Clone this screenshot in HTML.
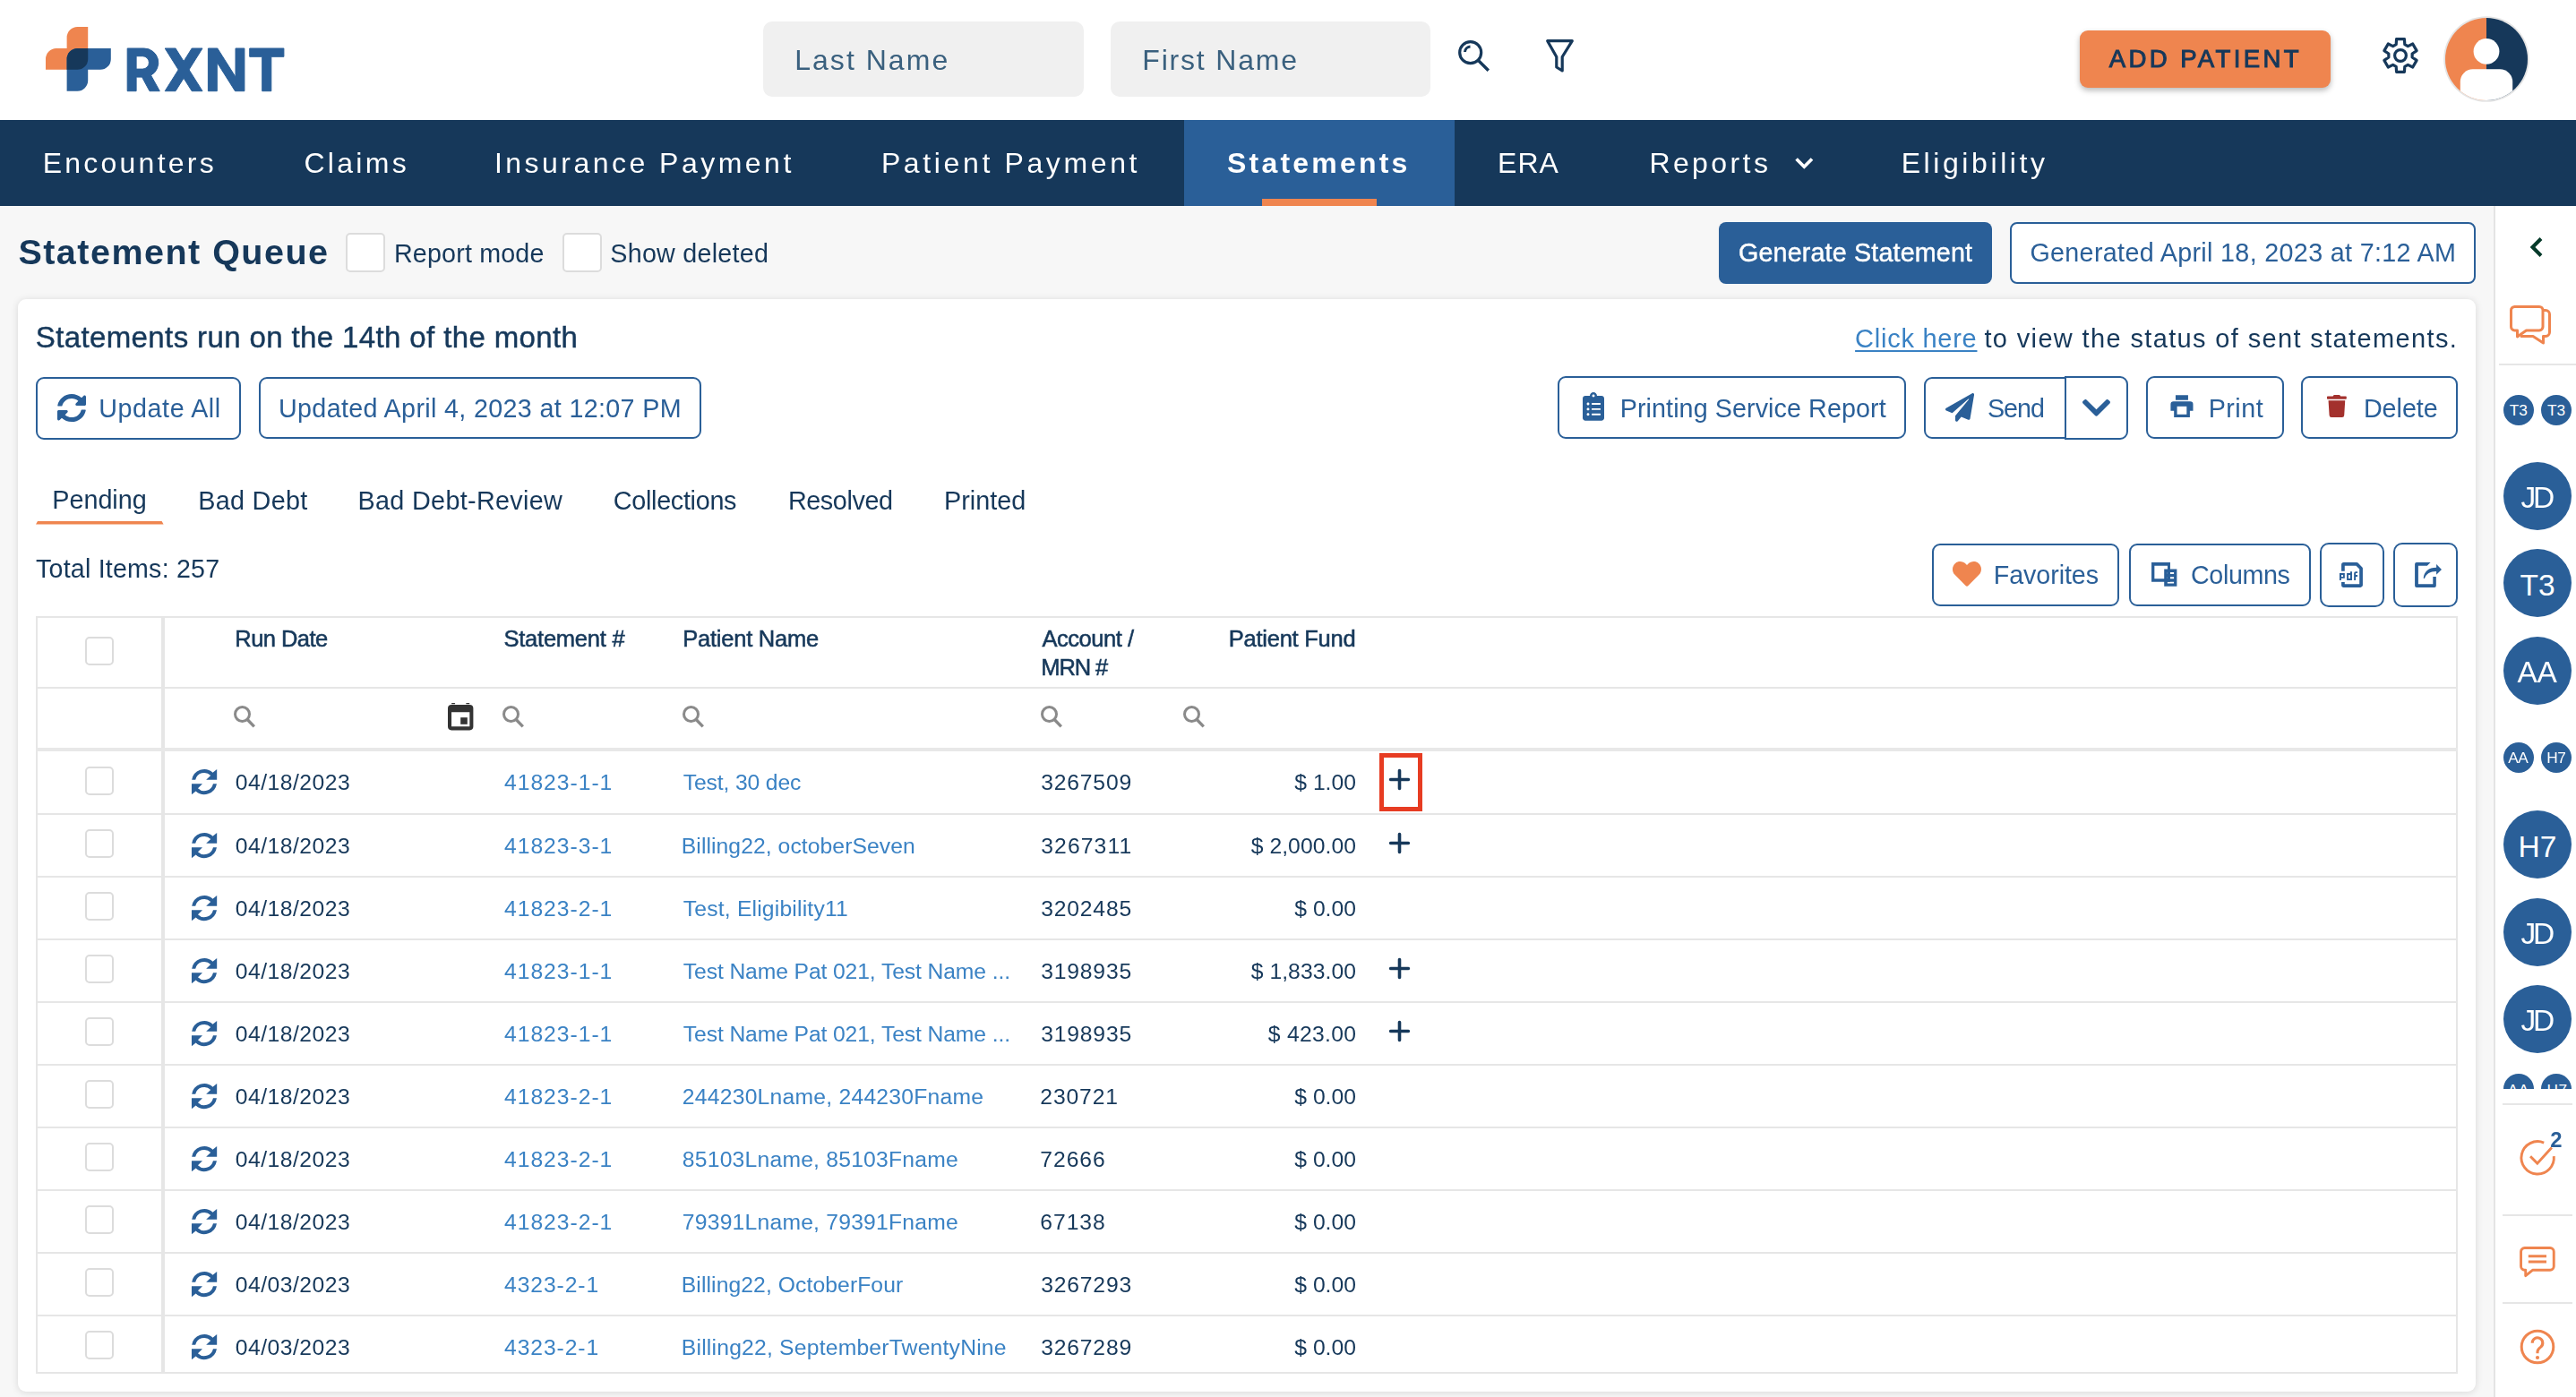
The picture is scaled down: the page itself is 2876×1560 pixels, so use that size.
<!DOCTYPE html>
<html lang="en"><head><meta charset="utf-8"><title>Statement Queue</title>
<style>
html,body{margin:0;padding:0;overflow:hidden}
body{width:2876px;height:1560px;overflow:hidden;background:#f7f7f7;position:relative;font-family:"Liberation Sans",sans-serif}
.b{position:absolute;box-sizing:border-box}
.t{position:absolute;white-space:nowrap;line-height:1;font-family:"Liberation Sans",sans-serif}
svg{display:block}
</style></head><body>
<div id="app" style="position:absolute;left:0;top:0;width:2876px;height:1560px;overflow:hidden">
<div class="b" style="left:0px;top:0px;width:2876px;height:134px;background:#fff;"></div>
<svg style="position:absolute;left:51.40px;top:30.00px;overflow:visible" width="72.80" height="71.80" viewBox="0 0 74 72" preserveAspectRatio="none" ><path fill="#ef854f" d="M36 0h12v36a12 12 0 0 1-12 12H0V36a12 12 0 0 1 12-12h12V12A12 12 0 0 1 36 0z"/><path fill="#2a5f98" d="M36 24h38v12a12 12 0 0 1-12 12H48v12a12 12 0 0 1-12 12H24V36a12 12 0 0 1 12-12z"/><path fill="#16385a" d="M36 24h12v12a12 12 0 0 1-12 12H24V36a12 12 0 0 1 12-12z"/></svg>
<svg style="position:absolute;left:140.00px;top:50.00px;overflow:visible" width="180.00" height="55.00" viewBox="140 50 180 55" preserveAspectRatio="none" ><path fill="#2a5f98" stroke="#2a5f98" stroke-width="1" stroke-linejoin="round" fill-rule="evenodd" d="M142.2 54H160.75A16.05 16.05 0 0 1 168.5 84.1L178.3 101.7H167L158.6 86.1H152.1V101.7H142.2ZM152.1 62.7H159.2A7.2 7.2 0 0 1 159.2 77.1H152.1Z"/><path fill="#2a5f98" stroke="#2a5f98" stroke-width="1" stroke-linejoin="round" d="M184.2 54H196L226 101.7H214.2Z M214.2 54H226L196 101.7H184.2ZM232.4 54H242.8L263 86V54H272.9V101.7H262.5L242.3 69.7V101.7H232.4ZM278.7 54H316.9V63.3H302.8V101.7H292.7V63.3H278.7Z"/></svg>
<div class="b" style="left:852px;top:24px;width:358px;height:84px;background:#f0f0f0;border-radius:10px;"></div>
<div class="b" style="left:1240px;top:24px;width:357px;height:84px;background:#f0f0f0;border-radius:10px;"></div>
<svg style="position:absolute;left:1628.00px;top:44.50px;overflow:visible" width="35.00" height="35.00" viewBox="0 0 35 35" preserveAspectRatio="none" ><circle cx="13.700" cy="13.700" r="12" fill="none" stroke="#16385a" stroke-width="3.200"/><path d="M22.500 22.500L33.800 33.800" stroke="#16385a" stroke-width="3.400" fill="none"/><path d="M7.500 13a6.500 6.500 0 0 1 6-6" stroke="#16385a" stroke-width="3" fill="none"/></svg>
<svg style="position:absolute;left:1725.50px;top:44.00px;overflow:visible" width="31.00" height="37.00" viewBox="0 0 31 37" preserveAspectRatio="none" ><path d="M1.700 1.700H29.300L18.200 19.500V35L11.800 31V19.500Z" fill="none" stroke="#16385a" stroke-width="3.200" stroke-linejoin="round"/></svg>
<div class="b" style="left:2322.2px;top:34px;width:280.0px;height:64px;background:#ef854f;border-radius:9px;box-shadow:0 3px 6px rgba(0,0,0,0.28);"></div>
<svg style="position:absolute;left:2660.00px;top:42.00px;overflow:visible" width="40.00" height="40.00" viewBox="-20 -20 40 40" preserveAspectRatio="none" ><path d="M-4.81 -12.40L-4.40 -18.38L4.40 -18.38L4.81 -12.40L8.33 -10.37L13.72 -13.00L18.12 -5.38L13.14 -2.03L13.14 2.03L18.12 5.38L13.72 13.00L8.33 10.37L4.81 12.40L4.40 18.38L-4.40 18.38L-4.81 12.40L-8.33 10.37L-13.72 13.00L-18.12 5.38L-13.14 2.03L-13.14 -2.03L-18.12 -5.38L-13.72 -13.00L-8.33 -10.37Z" fill="none" stroke="#16385a" stroke-width="3.200" stroke-linejoin="round"/><circle cx="0" cy="0" r="6.400" fill="none" stroke="#16385a" stroke-width="3.200"/></svg>
<svg style="position:absolute;left:2728.00px;top:18.00px;overflow:visible" width="96.00" height="96.00" viewBox="-48 -48 96 96" preserveAspectRatio="none" ><defs><clipPath id="avc"><circle cx="0" cy="0" r="46"/></clipPath></defs><circle cx="0" cy="0" r="47.8" fill="#e4e4e4"/><g clip-path="url(#avc)"><rect x="-46" y="-46" width="46" height="92" fill="#ef854f"/><rect x="0" y="-46" width="46" height="92" fill="#16385a"/><circle cx="0" cy="-8.600" r="14.400" fill="#fff"/><rect x="-29.200" y="11.300" width="58.400" height="60" rx="14" fill="#fff"/></g></svg>
<div class="b" style="left:0px;top:134px;width:2876px;height:96px;background:#16385a;"></div>
<div class="b" style="left:1322px;top:134px;width:302px;height:96px;background:#2a5f98;"></div>
<div class="b" style="left:1409px;top:222px;width:128px;height:8px;background:#ef854f;"></div>
<svg style="position:absolute;left:2004.00px;top:176.00px;overflow:visible" width="20.60" height="12.40" viewBox="0 0 19.2 12" preserveAspectRatio="none" ><path d="M1.500 1.500L9.600 9.800L17.700 1.500" fill="none" stroke="#fff" stroke-width="3.400"/></svg>
<div class="b" style="left:2784px;top:230px;width:92px;height:1330px;background:#fff;border-left:2px solid #e4e4e4;"></div>
<svg style="position:absolute;left:2825.30px;top:264.50px;overflow:visible" width="13.60" height="22.00" viewBox="0 0 13.6 22" preserveAspectRatio="none" ><path d="M12 1.500L2.500 11L12 20.500" fill="none" stroke="#063a2a" stroke-width="4"/></svg>
<svg style="position:absolute;left:2802.00px;top:340.60px;overflow:visible" width="46.00" height="43.40" viewBox="0 0 46 43.5" preserveAspectRatio="none" ><path d="M5.500 1.500H33a4 4 0 0 1 4 4V24a4 4 0 0 1-4 4H18.500L8.500 35V28H5.500a4 4 0 0 1-4-4V5.500a4 4 0 0 1 4-4z" fill="none" stroke="#ef854f" stroke-width="3" stroke-linejoin="round"/><path d="M37.500 5.500H40a4.500 4.500 0 0 1 4.500 4.500V30a4.500 4.500 0 0 1-4.500 4.500H37.500V42L26 34.500H12" fill="none" stroke="#ef854f" stroke-width="3" stroke-linejoin="round"/></svg>
<div class="b" style="left:2790px;top:406px;width:86px;height:2px;background:#e6e6e6;"></div>
<div class="b" style="left:2794.8px;top:440.5px;width:34.0px;height:34.0px;background:#2a5f98;border-radius:17px;"></div>
<div class="t" style="left:2711.8px;top:450.00px;width:200px;text-align:center;font-size:17.3px;color:#fff;letter-spacing:0px;">T3</div>
<div class="b" style="left:2837px;top:440.5px;width:34px;height:34.0px;background:#2a5f98;border-radius:17px;"></div>
<div class="t" style="left:2754px;top:450.00px;width:200px;text-align:center;font-size:17.3px;color:#fff;letter-spacing:0px;">T3</div>
<div class="b" style="left:2795px;top:516px;width:76px;height:76px;background:#2a5f98;border-radius:38px;"></div>
<div class="b" style="left:2795px;top:613.3px;width:76px;height:76.0px;background:#2a5f98;border-radius:38px;"></div>
<div class="t" style="left:2733px;top:637.00px;width:200px;text-align:center;font-size:33.5px;color:#fff;letter-spacing:0px;">T3</div>
<div class="b" style="left:2795px;top:710.7px;width:76px;height:76.0px;background:#2a5f98;border-radius:38px;"></div>
<div class="b" style="left:2794.8px;top:829px;width:34.0px;height:34px;background:#2a5f98;border-radius:17px;"></div>
<div class="b" style="left:2837px;top:829px;width:34px;height:34px;background:#2a5f98;border-radius:17px;"></div>
<div class="b" style="left:2795px;top:905.3px;width:76px;height:76.0px;background:#2a5f98;border-radius:38px;"></div>
<div class="t" style="left:2733px;top:929.00px;width:200px;text-align:center;font-size:33.5px;color:#fff;letter-spacing:0px;">H7</div>
<div class="b" style="left:2795px;top:1002.5999999999999px;width:76px;height:76.0px;background:#2a5f98;border-radius:38px;"></div>
<div class="b" style="left:2795px;top:1100px;width:76px;height:76px;background:#2a5f98;border-radius:38px;"></div>
<div class="b" style="left:2790px;top:1190px;width:86px;height:25.8px;overflow:hidden"><div class="b" style="left:4.6px;top:8.700px;width:34px;height:34px;border-radius:17px;background:#2a5f98"></div><div class="b" style="left:47px;top:8.700px;width:34px;height:34px;border-radius:17px;background:#2a5f98"></div><div class="t" style="left:9.700px;top:18.700px;font-size:17.300px;letter-spacing:0.5px;color:#fff">AA</div><div class="t" style="left:53.600px;top:18.700px;font-size:17.300px;letter-spacing:0.5px;color:#fff">H7</div></div>
<div class="b" style="left:2794px;top:1231.5px;width:78px;height:2.0px;background:#e6e6e6;"></div>
<svg style="position:absolute;left:2800.00px;top:1250.00px;overflow:visible" width="70.00" height="70.00" viewBox="0 0 1397 1397" preserveAspectRatio="none" ><path d="M801.5 519.9A363 363 0 1 0 1023.3 820.2" fill="none" stroke="#ef854f" stroke-width="58"/><path d="M500 822L655 980L975 628" fill="none" stroke="#ef854f" stroke-width="58" stroke-linejoin="miter"/></svg>
<div class="b" style="left:2794px;top:1356px;width:78px;height:2px;background:#e6e6e6;"></div>
<svg style="position:absolute;left:2813.20px;top:1391.70px;overflow:visible" width="39.70" height="34.20" viewBox="0 0 38.4 32.5" preserveAspectRatio="none" ><path d="M5.500 1.400H33a4 4 0 0 1 4 4V21a4 4 0 0 1-4 4H14L6.500 31V25H5.500a4 4 0 0 1-4-4V5.400a4 4 0 0 1 4-4z" fill="none" stroke="#ef854f" stroke-width="2.800" stroke-linejoin="round"/><path d="M9.500 10.200H29M9.500 16.200H29" stroke="#ef854f" stroke-width="2.800" fill="none"/></svg>
<div class="b" style="left:2794px;top:1453.5px;width:78px;height:2.0px;background:#e6e6e6;"></div>
<svg style="position:absolute;left:2813.00px;top:1484.00px;overflow:visible" width="40.00" height="40.00" viewBox="-20 -20 40 40" preserveAspectRatio="none" ><circle cx="0" cy="0" r="17.800" fill="none" stroke="#ef854f" stroke-width="3"/><path d="M-5.800 -4.300a5.800 5.800 0 1 1 9.500 4.400c-2.400 1.900-3.700 2.600-3.700 5.500v1.600" fill="none" stroke="#ef854f" stroke-width="3.100"/><circle cx="0" cy="12" r="2.100" fill="#ef854f"/></svg>
<div class="b" style="left:386px;top:260px;width:44px;height:43.60000000000002px;background:#fff;border:2px solid #dcdcdc;border-radius:5px;"></div>
<div class="b" style="left:628px;top:260px;width:44px;height:43.60000000000002px;background:#fff;border:2px solid #dcdcdc;border-radius:5px;"></div>
<div class="b" style="left:1919px;top:248px;width:305px;height:68.5px;background:#2a5f98;border-radius:8px;"></div>
<div class="b" style="left:2244px;top:248px;width:520px;height:68.5px;background:#fff;border:2px solid #2a5f98;border-radius:8px;"></div>
<div class="b" style="left:20px;top:334px;width:2744px;height:1220.3px;background:#fff;border-radius:9px;box-shadow:0 1px 9px rgba(0,0,0,0.13);"></div>
<div class="b" style="left:40px;top:421.2px;width:229px;height:69.40000000000003px;background:#fff;border:2px solid #2a5f98;border-radius:9px;"></div>
<svg style="position:absolute;left:64.00px;top:439.60px;overflow:visible" width="32.00" height="31.10" viewBox="8 8 496 496" preserveAspectRatio="none" ><path fill="#2a5f98" d="M370.72 133.28C339.458 104.008 298.888 87.962 255.848 88c-77.458.068-144.328 53.178-162.791 126.85-1.344 5.363-6.122 9.15-11.651 9.15H24.103c-7.498 0-13.194-6.807-11.807-14.176C33.933 94.924 134.813 8 256 8c66.448 0 126.791 26.136 171.315 68.685L463.03 40.97C478.149 25.851 504 36.559 504 57.941V192c0 13.255-10.745 24-24 24H345.941c-21.382 0-32.09-25.851-16.971-40.971l41.75-41.749zM32 296h134.059c21.382 0 32.09 25.851 16.971 40.971l-41.75 41.75c31.262 29.273 71.835 45.319 114.876 45.28 77.418-.07 144.315-53.144 162.787-126.849 1.344-5.363 6.122-9.15 11.651-9.15h57.304c7.498 0 13.194 6.807 11.807 14.176C478.067 417.076 377.187 504 256 504c-66.448 0-126.791-26.136-171.315-68.685L48.97 471.03C33.851 486.149 8 475.441 8 454.059V320c0-13.255 10.745-24 24-24z"/></svg>
<div class="b" style="left:289px;top:421.2px;width:494px;height:69.0px;background:#fff;border:2px solid #2a5f98;border-radius:9px;"></div>
<div class="b" style="left:1739px;top:420.4px;width:389px;height:69.20000000000005px;background:#fff;border:2px solid #2a5f98;border-radius:9px;"></div>
<svg style="position:absolute;left:1767.00px;top:438.20px;overflow:visible" width="24.00" height="31.80" viewBox="0 0 384 512" preserveAspectRatio="none" ><path fill="#2a5f98" d="M336 64h-80c0-35.3-28.7-64-64-64s-64 28.7-64 64H48C21.5 64 0 85.5 0 112v352c0 26.5 21.5 48 48 48h288c26.5 0 48-21.5 48-48V112c0-26.5-21.5-48-48-48zM96 424c-13.3 0-24-10.7-24-24s10.7-24 24-24 24 10.7 24 24-10.7 24-24 24zm0-96c-13.3 0-24-10.7-24-24s10.7-24 24-24 24 10.7 24 24-10.7 24-24 24zm0-96c-13.3 0-24-10.7-24-24s10.7-24 24-24 24 10.7 24 24-10.7 24-24 24zm96-192c13.3 0 24 10.7 24 24s-10.7 24-24 24-24-10.7-24-24 10.7-24 24-24zm128 368c0 4.4-3.6 8-8 8H168c-4.400 0-8-3.600-8-8v-16c0-4.400 3.600-8 8-8h144c4.400 0 8 3.600 8 8v16zm0-96c0 4.400-3.600 8-8 8H168c-4.400 0-8-3.600-8-8v-16c0-4.400 3.600-8 8-8h144c4.400 0 8 3.600 8 8v16zm0-96c0 4.400-3.600 8-8 8H168c-4.400 0-8-3.600-8-8v-16c0-4.400 3.600-8 8-8h144c4.400 0 8 3.600 8 8v16z"/></svg>
<div class="b" style="left:2148px;top:421.2px;width:158.5px;height:69.19999999999999px;background:#fff;border:2px solid #2a5f98;border-radius:9px 0 0 9px;"></div>
<div class="b" style="left:2304.5px;top:420.4px;width:71.5px;height:71.0px;background:#fff;border:2px solid #2a5f98;border-radius:0 9px 9px 0;"></div>
<svg style="position:absolute;left:2172.30px;top:439.00px;overflow:visible" width="32.10" height="31.80" viewBox="0 0 512 512" preserveAspectRatio="none" ><path fill="#2a5f98" d="M476 3.2L12.5 270.6c-18.1 10.4-15.8 35.6 2.2 43.2L121 358.4l287.3-253.2c5.5-4.9 13.3 2.6 8.6 8.3L176 407v80.5c0 23.6 28.5 32.9 42.5 15.8L282 426l124.6 52.2c14.2 6 30.4-2.9 33-18.2l72-432C515 7.8 493.3-6.800 476 3.2z"/></svg>
<svg style="position:absolute;left:2324.50px;top:446.30px;overflow:visible" width="31.00" height="18.70" viewBox="5.6 123.5 436.8 264.9" preserveAspectRatio="none" ><path fill="#2a5f98" d="M207.029 381.476L12.686 187.132c-9.373-9.373-9.373-24.569 0-33.941l22.667-22.667c9.357-9.357 24.522-9.375 33.901-.04L224 284.505l154.745-154.021c9.379-9.335 24.544-9.317 33.901.04l22.667 22.667c9.373 9.373 9.373 24.569 0 33.941L240.971 381.476c-9.373 9.372-24.569 9.372-33.942 0z"/></svg>
<div class="b" style="left:2396px;top:420.4px;width:153.5px;height:69.20000000000005px;background:#fff;border:2px solid #2a5f98;border-radius:9px;"></div>
<svg style="position:absolute;left:2410.00px;top:430.00px;overflow:visible" width="60.00" height="50.00" viewBox="0 0 1676 1397" preserveAspectRatio="none" ><path fill="#2a5f98" d="M530 315H920V465H530Z M465 510H985a90 90 0 0 1 90 90V805H375V600a90 90 0 0 1 90-90Z M480 700H975V1005H480Z"/><path fill="#fff" d="M575 665H875V915H575Z"/></svg>
<div class="b" style="left:2569px;top:420.4px;width:175px;height:69.20000000000005px;background:#fff;border:2px solid #2a5f98;border-radius:9px;"></div>
<svg style="position:absolute;left:2598.40px;top:441.00px;overflow:visible" width="21.80" height="25.00" viewBox="0 0 448 512" preserveAspectRatio="none" ><path fill="#a3312d" d="M432 32H312l-9.4-18.7A24 24 0 0 0 281.1 0H166.8a23.72 23.72 0 0 0-21.4 13.3L136 32H16A16 16 0 0 0 0 48v32a16 16 0 0 0 16 16h416a16 16 0 0 0 16-16V48a16 16 0 0 0-16-16zM53.2 467a48 48 0 0 0 47.9 45h245.8a48 48 0 0 0 47.9-45L416 128H32z"/></svg>
<div class="b" style="left:40px;top:582px;width:142.6px;height:3.6000000000000227px;background:#ef854f;clip-path:polygon(2px 0,calc(100% - 2px) 0,100% 100%,0 100%);"></div>
<div class="b" style="left:2156.5px;top:607px;width:209.0px;height:69.60000000000002px;background:#fff;border:2px solid #2a5f98;border-radius:9px;"></div>
<svg style="position:absolute;left:2180.00px;top:627.00px;overflow:visible" width="32.00" height="27.70" viewBox="0 32 512 448" preserveAspectRatio="none" ><path fill="#ef854f" d="M462.3 62.6C407.5 15.9 326 24.3 275.7 76.2L256 96.5l-19.7-20.3C186.1 24.3 104.5 15.9 49.7 62.6c-62.8 53.6-66.1 149.8-9.9 207.9l193.5 199.8c12.5 12.9 32.8 12.9 45.3 0l193.5-199.8c56.3-58.1 53-154.3-9.8-207.9z"/></svg>
<div class="b" style="left:2377px;top:607px;width:202.5px;height:69.60000000000002px;background:#fff;border:2px solid #2a5f98;border-radius:9px;"></div>
<svg style="position:absolute;left:2380.00px;top:620.00px;overflow:visible" width="70.00" height="46.00" viewBox="0 0 2126 1397" preserveAspectRatio="none" ><path fill="#2a5f98" fill-rule="evenodd" d="M670 245H1305V905H670Z M770 355H1215V795H770Z"/><path fill="#2a5f98" fill-rule="evenodd" d="M1100 470H1530V1055H1100Z M1210 575H1430V635H1210Z M1210 735H1430V795H1210Z M1210 900H1430V960H1210Z"/></svg>
<div class="b" style="left:2590px;top:606px;width:71.59999999999991px;height:71.60000000000002px;background:#fff;border:2px solid #2a5f98;border-radius:10px;"></div>
<div class="b" style="left:2672px;top:606px;width:71.80000000000018px;height:71.60000000000002px;background:#fff;border:2px solid #2a5f98;border-radius:10px;"></div>
<svg style="position:absolute;left:2600.00px;top:620.00px;overflow:visible" width="140.00" height="46.00" viewBox="0 0 2576 846" preserveAspectRatio="none" ><path d="M293 328V195a14 14 0 0 1 14-14H575L663.5 270V612a14 14 0 0 1-14 14H307a14 14 0 0 1-14-14V550" fill="none" stroke="#2a5f98" stroke-width="68" stroke-linejoin="round"/><path fill="#2a5f98" fill-rule="evenodd" d="M220 370H328V475H255V515H220Z M258 405H295V440H258Z M370 370H440V335H478V515H370Z M405 405H440V478H405Z M518 515V372Q518 335 555 335H590V368H560Q553 368 553 375V405H590V440H553V515Z"/><path d="M2020 215H1838V592H2140V440H2205V625a35 35 0 0 1-35 35H1803a35 35 0 0 1-35-35V183a35 35 0 0 1 35-35H2090Z" fill="#2a5f98"/><path d="M2318 292L2210 185V255C2050 255 1955 340 1945 472L1968 478C2000 380 2080 330 2210 330V400Z" fill="#2a5f98"/></svg>
<div class="b" style="left:40px;top:688px;width:2704px;height:846px;background:#fff;border:2px solid #e6e6e6;"></div>
<div class="b" style="left:180px;top:688px;width:4px;height:846px;background:#e6e6e6;"></div>
<div class="b" style="left:40px;top:767px;width:2704px;height:2px;background:#e6e6e6;"></div>
<div class="b" style="left:40px;top:835px;width:2704px;height:4px;background:#e8e8e8;"></div>
<div class="b" style="left:40px;top:907.5px;width:2704px;height:2.0px;background:#e6e6e6;"></div>
<div class="b" style="left:40px;top:977.5px;width:2704px;height:2.0px;background:#e6e6e6;"></div>
<div class="b" style="left:40px;top:1047.5px;width:2704px;height:2.0px;background:#e6e6e6;"></div>
<div class="b" style="left:40px;top:1117.5px;width:2704px;height:2.0px;background:#e6e6e6;"></div>
<div class="b" style="left:40px;top:1187.5px;width:2704px;height:2.0px;background:#e6e6e6;"></div>
<div class="b" style="left:40px;top:1257.5px;width:2704px;height:2.0px;background:#e6e6e6;"></div>
<div class="b" style="left:40px;top:1327.5px;width:2704px;height:2.0px;background:#e6e6e6;"></div>
<div class="b" style="left:40px;top:1397.5px;width:2704px;height:2.0px;background:#e6e6e6;"></div>
<div class="b" style="left:40px;top:1467.5px;width:2704px;height:2.0px;background:#e6e6e6;"></div>
<div class="b" style="left:95.2px;top:711px;width:32.0px;height:32px;background:#fff;border:2px solid #dcdcdc;border-radius:5px;"></div>
<svg style="position:absolute;left:261.30px;top:787.90px;overflow:visible" width="24.00" height="24.50" viewBox="0 0 24 24.5" preserveAspectRatio="none" ><circle cx="9.500" cy="9.500" r="8" fill="none" stroke="#8a8a8a" stroke-width="3"/><path d="M15.200 15.500L22.800 23.400" stroke="#8a8a8a" stroke-width="3.300" fill="none"/></svg>
<svg style="position:absolute;left:561.30px;top:787.90px;overflow:visible" width="24.00" height="24.50" viewBox="0 0 24 24.5" preserveAspectRatio="none" ><circle cx="9.500" cy="9.500" r="8" fill="none" stroke="#8a8a8a" stroke-width="3"/><path d="M15.200 15.500L22.800 23.400" stroke="#8a8a8a" stroke-width="3.300" fill="none"/></svg>
<svg style="position:absolute;left:761.70px;top:787.90px;overflow:visible" width="24.00" height="24.50" viewBox="0 0 24 24.5" preserveAspectRatio="none" ><circle cx="9.500" cy="9.500" r="8" fill="none" stroke="#8a8a8a" stroke-width="3"/><path d="M15.200 15.500L22.800 23.400" stroke="#8a8a8a" stroke-width="3.300" fill="none"/></svg>
<svg style="position:absolute;left:1161.70px;top:787.90px;overflow:visible" width="24.00" height="24.50" viewBox="0 0 24 24.5" preserveAspectRatio="none" ><circle cx="9.500" cy="9.500" r="8" fill="none" stroke="#8a8a8a" stroke-width="3"/><path d="M15.200 15.500L22.800 23.400" stroke="#8a8a8a" stroke-width="3.300" fill="none"/></svg>
<svg style="position:absolute;left:1321.20px;top:787.90px;overflow:visible" width="24.00" height="24.50" viewBox="0 0 24 24.5" preserveAspectRatio="none" ><circle cx="9.500" cy="9.500" r="8" fill="none" stroke="#8a8a8a" stroke-width="3"/><path d="M15.200 15.500L22.800 23.400" stroke="#8a8a8a" stroke-width="3.300" fill="none"/></svg>
<svg style="position:absolute;left:499.70px;top:785.40px;overflow:visible" width="28.40" height="30.40" viewBox="0 0 28 30" preserveAspectRatio="none" ><rect x="4" y="0" width="4" height="1.300" rx="0.600" fill="#333"/><rect x="20" y="0" width="4" height="1.300" rx="0.600" fill="#333"/><path fill="#333" fill-rule="evenodd" d="M4 2H24a4 4 0 0 1 4 4V26a4 4 0 0 1-4 4H4a4 4 0 0 1-4-4V6a4 4 0 0 1 4-4z M4 10H24V26H4z"/><rect x="14" y="16" width="7.500" height="7.500" fill="#333"/></svg>
<div class="b" style="left:95px;top:856px;width:31.799999999999997px;height:31.799999999999955px;background:#fff;border:2px solid #dcdcdc;border-radius:5px;"></div>
<svg style="position:absolute;left:213.90px;top:858.90px;overflow:visible" width="28.20" height="28.20" viewBox="250 250 785 785" preserveAspectRatio="none" ><path fill="#2a5f98" d="M255 580A392 392 0 0 1 905 352L1035 250V580H700L840.5 441.6A282 282 0 0 0 367 580ZM1029 704A392 392 0 0 1 379 932L249 1034V704H584L443.5 842.4A282 282 0 0 0 917 704Z"/></svg>
<svg style="position:absolute;left:1550.90px;top:859.20px;overflow:visible" width="23.00" height="23.00" viewBox="-11.5 -11.5 23 23" preserveAspectRatio="none" ><path d="M-9.9 0H9.9M0 -9.9V9.9" stroke="#16385a" stroke-width="3.6" stroke-linecap="round" fill="none"/></svg>
<div class="b" style="left:95px;top:926px;width:31.799999999999997px;height:31.799999999999955px;background:#fff;border:2px solid #dcdcdc;border-radius:5px;"></div>
<svg style="position:absolute;left:213.90px;top:929.90px;overflow:visible" width="28.20" height="28.20" viewBox="250 250 785 785" preserveAspectRatio="none" ><path fill="#2a5f98" d="M255 580A392 392 0 0 1 905 352L1035 250V580H700L840.5 441.6A282 282 0 0 0 367 580ZM1029 704A392 392 0 0 1 379 932L249 1034V704H584L443.5 842.4A282 282 0 0 0 917 704Z"/></svg>
<svg style="position:absolute;left:1550.90px;top:929.50px;overflow:visible" width="23.00" height="23.00" viewBox="-11.5 -11.5 23 23" preserveAspectRatio="none" ><path d="M-9.9 0H9.9M0 -9.9V9.9" stroke="#16385a" stroke-width="3.6" stroke-linecap="round" fill="none"/></svg>
<div class="b" style="left:95px;top:996px;width:31.799999999999997px;height:31.799999999999955px;background:#fff;border:2px solid #dcdcdc;border-radius:5px;"></div>
<svg style="position:absolute;left:213.90px;top:999.90px;overflow:visible" width="28.20" height="28.20" viewBox="250 250 785 785" preserveAspectRatio="none" ><path fill="#2a5f98" d="M255 580A392 392 0 0 1 905 352L1035 250V580H700L840.5 441.6A282 282 0 0 0 367 580ZM1029 704A392 392 0 0 1 379 932L249 1034V704H584L443.5 842.4A282 282 0 0 0 917 704Z"/></svg>
<div class="b" style="left:95px;top:1066px;width:31.799999999999997px;height:31.799999999999955px;background:#fff;border:2px solid #dcdcdc;border-radius:5px;"></div>
<svg style="position:absolute;left:213.90px;top:1069.90px;overflow:visible" width="28.20" height="28.20" viewBox="250 250 785 785" preserveAspectRatio="none" ><path fill="#2a5f98" d="M255 580A392 392 0 0 1 905 352L1035 250V580H700L840.5 441.6A282 282 0 0 0 367 580ZM1029 704A392 392 0 0 1 379 932L249 1034V704H584L443.5 842.4A282 282 0 0 0 917 704Z"/></svg>
<svg style="position:absolute;left:1550.90px;top:1069.50px;overflow:visible" width="23.00" height="23.00" viewBox="-11.5 -11.5 23 23" preserveAspectRatio="none" ><path d="M-9.9 0H9.9M0 -9.9V9.9" stroke="#16385a" stroke-width="3.6" stroke-linecap="round" fill="none"/></svg>
<div class="b" style="left:95px;top:1136px;width:31.799999999999997px;height:31.799999999999955px;background:#fff;border:2px solid #dcdcdc;border-radius:5px;"></div>
<svg style="position:absolute;left:213.90px;top:1139.90px;overflow:visible" width="28.20" height="28.20" viewBox="250 250 785 785" preserveAspectRatio="none" ><path fill="#2a5f98" d="M255 580A392 392 0 0 1 905 352L1035 250V580H700L840.5 441.6A282 282 0 0 0 367 580ZM1029 704A392 392 0 0 1 379 932L249 1034V704H584L443.5 842.4A282 282 0 0 0 917 704Z"/></svg>
<svg style="position:absolute;left:1550.90px;top:1139.50px;overflow:visible" width="23.00" height="23.00" viewBox="-11.5 -11.5 23 23" preserveAspectRatio="none" ><path d="M-9.9 0H9.9M0 -9.9V9.9" stroke="#16385a" stroke-width="3.6" stroke-linecap="round" fill="none"/></svg>
<div class="b" style="left:95px;top:1206px;width:31.799999999999997px;height:31.799999999999955px;background:#fff;border:2px solid #dcdcdc;border-radius:5px;"></div>
<svg style="position:absolute;left:213.90px;top:1209.90px;overflow:visible" width="28.20" height="28.20" viewBox="250 250 785 785" preserveAspectRatio="none" ><path fill="#2a5f98" d="M255 580A392 392 0 0 1 905 352L1035 250V580H700L840.5 441.6A282 282 0 0 0 367 580ZM1029 704A392 392 0 0 1 379 932L249 1034V704H584L443.5 842.4A282 282 0 0 0 917 704Z"/></svg>
<div class="b" style="left:95px;top:1276px;width:31.799999999999997px;height:31.799999999999955px;background:#fff;border:2px solid #dcdcdc;border-radius:5px;"></div>
<svg style="position:absolute;left:213.90px;top:1279.90px;overflow:visible" width="28.20" height="28.20" viewBox="250 250 785 785" preserveAspectRatio="none" ><path fill="#2a5f98" d="M255 580A392 392 0 0 1 905 352L1035 250V580H700L840.5 441.6A282 282 0 0 0 367 580ZM1029 704A392 392 0 0 1 379 932L249 1034V704H584L443.5 842.4A282 282 0 0 0 917 704Z"/></svg>
<div class="b" style="left:95px;top:1346px;width:31.799999999999997px;height:31.799999999999955px;background:#fff;border:2px solid #dcdcdc;border-radius:5px;"></div>
<svg style="position:absolute;left:213.90px;top:1349.90px;overflow:visible" width="28.20" height="28.20" viewBox="250 250 785 785" preserveAspectRatio="none" ><path fill="#2a5f98" d="M255 580A392 392 0 0 1 905 352L1035 250V580H700L840.5 441.6A282 282 0 0 0 367 580ZM1029 704A392 392 0 0 1 379 932L249 1034V704H584L443.5 842.4A282 282 0 0 0 917 704Z"/></svg>
<div class="b" style="left:95px;top:1416px;width:31.799999999999997px;height:31.799999999999955px;background:#fff;border:2px solid #dcdcdc;border-radius:5px;"></div>
<svg style="position:absolute;left:213.90px;top:1419.90px;overflow:visible" width="28.20" height="28.20" viewBox="250 250 785 785" preserveAspectRatio="none" ><path fill="#2a5f98" d="M255 580A392 392 0 0 1 905 352L1035 250V580H700L840.5 441.6A282 282 0 0 0 367 580ZM1029 704A392 392 0 0 1 379 932L249 1034V704H584L443.5 842.4A282 282 0 0 0 917 704Z"/></svg>
<div class="b" style="left:95px;top:1486px;width:31.799999999999997px;height:31.799999999999955px;background:#fff;border:2px solid #dcdcdc;border-radius:5px;"></div>
<svg style="position:absolute;left:213.90px;top:1489.90px;overflow:visible" width="28.20" height="28.20" viewBox="250 250 785 785" preserveAspectRatio="none" ><path fill="#2a5f98" d="M255 580A392 392 0 0 1 905 352L1035 250V580H700L840.5 441.6A282 282 0 0 0 367 580ZM1029 704A392 392 0 0 1 379 932L249 1034V704H584L443.5 842.4A282 282 0 0 0 917 704Z"/></svg>
<div class="b" style="left:1540px;top:841px;width:48px;height:64.79999999999995px;border:5px solid #e73c22;"></div>
<div style="position:absolute;left:0;top:0;width:2876px;height:1560px;will-change:transform">
<div class="t" style="left:887.20px;top:51.00px;font-size:32px;color:#3a607e;letter-spacing:2.033px;">Last Name</div>
<div class="t" style="left:1275.30px;top:51.00px;font-size:32px;color:#3a607e;letter-spacing:1.805px;">First Name</div>
<div class="t" style="left:2354.80px;top:52.00px;font-size:27.6px;color:#16385a;letter-spacing:3.351px;-webkit-text-stroke:1.0px #16385a;">ADD PATIENT</div>
<div class="t" style="left:47.70px;top:166.00px;font-size:32px;color:#fff;letter-spacing:3.236px;">Encounters</div>
<div class="t" style="left:339.40px;top:166.00px;font-size:32px;color:#fff;letter-spacing:3.304px;">Claims</div>
<div class="t" style="left:551.90px;top:166.00px;font-size:32px;color:#fff;letter-spacing:3.480px;">Insurance Payment</div>
<div class="t" style="left:983.90px;top:166.00px;font-size:32px;color:#fff;letter-spacing:3.628px;">Patient Payment</div>
<div class="t" style="left:1370.00px;top:166.00px;font-size:32px;color:#fff;letter-spacing:3.200px;font-weight:700;">Statements</div>
<div class="t" style="left:1672.10px;top:166.00px;font-size:32px;color:#fff;letter-spacing:1.023px;">ERA</div>
<div class="t" style="left:1841.40px;top:166.00px;font-size:32px;color:#fff;letter-spacing:3.409px;">Reports</div>
<div class="t" style="left:2122.70px;top:166.00px;font-size:32px;color:#fff;letter-spacing:3.582px;">Eligibility</div>
<div class="t" style="left:2814.40px;top:539.00px;font-size:33.5px;color:#fff;letter-spacing:-3.150px;">JD</div>
<div class="t" style="left:2810.60px;top:734.00px;font-size:33.5px;color:#fff;letter-spacing:-0.544px;">AA</div>
<div class="t" style="left:2800.30px;top:838.00px;font-size:17.3px;color:#fff;letter-spacing:-0.626px;">AA</div>
<div class="t" style="left:2843.20px;top:838.00px;font-size:17.3px;color:#fff;letter-spacing:-0.480px;">H7</div>
<div class="t" style="left:2814.40px;top:1026.00px;font-size:33.5px;color:#fff;letter-spacing:-3.150px;">JD</div>
<div class="t" style="left:2814.40px;top:1123.00px;font-size:33.5px;color:#fff;letter-spacing:-3.150px;">JD</div>
<div class="t" style="left:2847.20px;top:1261.00px;font-size:23.8px;color:#2a5f98;letter-spacing:-1.400px;font-weight:700;">2</div>
<div class="t" style="left:20.40px;top:262.00px;font-size:39.5px;color:#16385a;letter-spacing:1.480px;font-weight:700;">Statement Queue</div>
<div class="t" style="left:440.00px;top:269.00px;font-size:28.7px;color:#16385a;letter-spacing:0.152px;">Report mode</div>
<div class="t" style="left:681.30px;top:269.00px;font-size:28.7px;color:#16385a;letter-spacing:0.255px;">Show deleted</div>
<div class="t" style="left:1941.00px;top:268.00px;font-size:28.7px;color:#fff;letter-spacing:0.155px;-webkit-text-stroke:0.45px #fff;">Generate Statement</div>
<div class="t" style="left:2266.40px;top:268.00px;font-size:28.7px;color:#2a5f98;letter-spacing:0.336px;">Generated April 18, 2023 at 7:12 AM</div>
<div class="t" style="left:39.80px;top:360.00px;font-size:33px;color:#16385a;letter-spacing:0.380px;-webkit-text-stroke:0.45px #16385a;">Statements run on the 14th of the month</div>
<div class="t" style="left:2071.10px;top:364.00px;font-size:29px;color:#3a82c4;letter-spacing:0.744px;text-decoration:underline;text-decoration-thickness:1.6px;text-underline-offset:2.5px;">Click here</div>
<div class="t" style="left:2215.40px;top:364.00px;font-size:29px;color:#16385a;letter-spacing:1.360px;">to view the status of sent statements.</div>
<div class="t" style="left:110.20px;top:442.00px;font-size:28.7px;color:#2a5f98;letter-spacing:0.580px;">Update All</div>
<div class="t" style="left:311.00px;top:442.00px;font-size:28.7px;color:#2a5f98;letter-spacing:0.345px;">Updated April 4, 2023 at 12:07 PM</div>
<div class="t" style="left:1808.70px;top:442.00px;font-size:28.7px;color:#2a5f98;letter-spacing:0.091px;">Printing Service Report</div>
<div class="t" style="left:2219.00px;top:442.00px;font-size:28.7px;color:#2a5f98;letter-spacing:-1.015px;">Send</div>
<div class="t" style="left:2465.70px;top:442.00px;font-size:28.7px;color:#2a5f98;letter-spacing:0.496px;">Print</div>
<div class="t" style="left:2638.90px;top:442.00px;font-size:28.7px;color:#2a5f98;letter-spacing:-0.014px;">Delete</div>
<div class="t" style="left:58.30px;top:544.00px;font-size:28.8px;color:#16385a;letter-spacing:-0.044px;">Pending</div>
<div class="t" style="left:221.20px;top:545.00px;font-size:28.8px;color:#16385a;letter-spacing:0.291px;">Bad Debt</div>
<div class="t" style="left:399.50px;top:545.00px;font-size:28.8px;color:#16385a;letter-spacing:0.309px;">Bad Debt-Review</div>
<div class="t" style="left:684.80px;top:545.00px;font-size:28.8px;color:#16385a;letter-spacing:-0.315px;">Collections</div>
<div class="t" style="left:879.90px;top:545.00px;font-size:28.8px;color:#16385a;letter-spacing:-0.420px;">Resolved</div>
<div class="t" style="left:1054.10px;top:545.00px;font-size:28.8px;color:#16385a;letter-spacing:-0.021px;">Printed</div>
<div class="t" style="left:40.00px;top:621.00px;font-size:28.6px;color:#16385a;letter-spacing:0.217px;">Total Items: 257</div>
<div class="t" style="left:2225.80px;top:628.00px;font-size:28.7px;color:#2a5f98;letter-spacing:-0.091px;">Favorites</div>
<div class="t" style="left:2446.00px;top:628.00px;font-size:28.7px;color:#2a5f98;letter-spacing:-0.375px;">Columns</div>
<div class="t" style="left:262.30px;top:701.00px;font-size:25.5px;color:#16385a;letter-spacing:-0.549px;-webkit-text-stroke:0.55px #16385a;">Run Date</div>
<div class="t" style="left:562.50px;top:701.00px;font-size:25.5px;color:#16385a;letter-spacing:-0.242px;-webkit-text-stroke:0.55px #16385a;">Statement #</div>
<div class="t" style="left:762.30px;top:701.00px;font-size:25.5px;color:#16385a;letter-spacing:-0.237px;-webkit-text-stroke:0.55px #16385a;">Patient Name</div>
<div class="t" style="left:1163.50px;top:701.00px;font-size:25.5px;color:#16385a;letter-spacing:-0.465px;-webkit-text-stroke:0.55px #16385a;">Account /</div>
<div class="t" style="left:1162.30px;top:733.00px;font-size:25.5px;color:#16385a;letter-spacing:-1.114px;-webkit-text-stroke:0.55px #16385a;">MRN #</div>
<div class="t" style="left:1371.80px;top:701.00px;font-size:25.5px;color:#16385a;letter-spacing:-0.247px;-webkit-text-stroke:0.55px #16385a;">Patient Fund</div>
<div class="t" style="left:262.80px;top:862.00px;font-size:24.7px;color:#16385a;letter-spacing:0.486px;">04/18/2023</div>
<div class="t" style="left:563.00px;top:862.00px;font-size:24.7px;color:#3a82c4;letter-spacing:0.972px;">41823-1-1</div>
<div class="t" style="left:762.80px;top:862.00px;font-size:24.7px;color:#3a82c4;letter-spacing:-0.143px;">Test, 30 dec</div>
<div class="t" style="left:1162.30px;top:862.00px;font-size:24.7px;color:#16385a;letter-spacing:0.787px;">3267509</div>
<div class="t" style="left:1445.30px;top:862.00px;font-size:24.7px;color:#16385a;">$ 1.00</div>
<div class="t" style="left:262.80px;top:933.00px;font-size:24.7px;color:#16385a;letter-spacing:0.486px;">04/18/2023</div>
<div class="t" style="left:563.00px;top:933.00px;font-size:24.7px;color:#3a82c4;letter-spacing:0.972px;">41823-3-1</div>
<div class="t" style="left:760.80px;top:933.00px;font-size:24.7px;color:#3a82c4;letter-spacing:0.070px;">Billing22, octoberSeven</div>
<div class="t" style="left:1162.30px;top:933.00px;font-size:24.7px;color:#16385a;letter-spacing:1.092px;">3267311</div>
<div class="t" style="left:1396.70px;top:933.00px;font-size:24.7px;color:#16385a;letter-spacing:0.060px;">$ 2,000.00</div>
<div class="t" style="left:262.80px;top:1003.00px;font-size:24.7px;color:#16385a;letter-spacing:0.486px;">04/18/2023</div>
<div class="t" style="left:563.00px;top:1003.00px;font-size:24.7px;color:#3a82c4;letter-spacing:0.972px;">41823-2-1</div>
<div class="t" style="left:762.80px;top:1003.00px;font-size:24.7px;color:#3a82c4;letter-spacing:0.182px;">Test, Eligibility11</div>
<div class="t" style="left:1162.30px;top:1003.00px;font-size:24.7px;color:#16385a;letter-spacing:0.787px;">3202485</div>
<div class="t" style="left:1445.30px;top:1003.00px;font-size:24.7px;color:#16385a;">$ 0.00</div>
<div class="t" style="left:262.80px;top:1073.00px;font-size:24.7px;color:#16385a;letter-spacing:0.486px;">04/18/2023</div>
<div class="t" style="left:563.00px;top:1073.00px;font-size:24.7px;color:#3a82c4;letter-spacing:0.972px;">41823-1-1</div>
<div class="t" style="left:762.80px;top:1073.00px;font-size:24.7px;color:#3a82c4;letter-spacing:-0.111px;">Test Name Pat 021, Test Name ...</div>
<div class="t" style="left:1162.30px;top:1073.00px;font-size:24.7px;color:#16385a;letter-spacing:0.787px;">3198935</div>
<div class="t" style="left:1396.70px;top:1073.00px;font-size:24.7px;color:#16385a;letter-spacing:0.060px;">$ 1,833.00</div>
<div class="t" style="left:262.80px;top:1143.00px;font-size:24.7px;color:#16385a;letter-spacing:0.486px;">04/18/2023</div>
<div class="t" style="left:563.00px;top:1143.00px;font-size:24.7px;color:#3a82c4;letter-spacing:0.972px;">41823-1-1</div>
<div class="t" style="left:762.80px;top:1143.00px;font-size:24.7px;color:#3a82c4;letter-spacing:-0.111px;">Test Name Pat 021, Test Name ...</div>
<div class="t" style="left:1162.30px;top:1143.00px;font-size:24.7px;color:#16385a;letter-spacing:0.787px;">3198935</div>
<div class="t" style="left:1415.70px;top:1143.00px;font-size:24.7px;color:#16385a;letter-spacing:0.305px;">$ 423.00</div>
<div class="t" style="left:262.80px;top:1213.00px;font-size:24.7px;color:#16385a;letter-spacing:0.486px;">04/18/2023</div>
<div class="t" style="left:563.00px;top:1213.00px;font-size:24.7px;color:#3a82c4;letter-spacing:0.972px;">41823-2-1</div>
<div class="t" style="left:761.80px;top:1213.00px;font-size:24.7px;color:#3a82c4;letter-spacing:0.236px;">244230Lname, 244230Fname</div>
<div class="t" style="left:1161.30px;top:1213.00px;font-size:24.7px;color:#16385a;letter-spacing:0.870px;">230721</div>
<div class="t" style="left:1445.30px;top:1213.00px;font-size:24.7px;color:#16385a;">$ 0.00</div>
<div class="t" style="left:262.80px;top:1283.00px;font-size:24.7px;color:#16385a;letter-spacing:0.486px;">04/18/2023</div>
<div class="t" style="left:563.00px;top:1283.00px;font-size:24.7px;color:#3a82c4;letter-spacing:0.972px;">41823-2-1</div>
<div class="t" style="left:761.80px;top:1283.00px;font-size:24.7px;color:#3a82c4;letter-spacing:0.219px;">85103Lname, 85103Fname</div>
<div class="t" style="left:1161.30px;top:1283.00px;font-size:24.7px;color:#16385a;letter-spacing:0.945px;">72666</div>
<div class="t" style="left:1445.30px;top:1283.00px;font-size:24.7px;color:#16385a;">$ 0.00</div>
<div class="t" style="left:262.80px;top:1353.00px;font-size:24.7px;color:#16385a;letter-spacing:0.486px;">04/18/2023</div>
<div class="t" style="left:563.00px;top:1353.00px;font-size:24.7px;color:#3a82c4;letter-spacing:0.972px;">41823-2-1</div>
<div class="t" style="left:761.80px;top:1353.00px;font-size:24.7px;color:#3a82c4;letter-spacing:0.219px;">79391Lname, 79391Fname</div>
<div class="t" style="left:1161.30px;top:1353.00px;font-size:24.7px;color:#16385a;letter-spacing:0.945px;">67138</div>
<div class="t" style="left:1445.30px;top:1353.00px;font-size:24.7px;color:#16385a;">$ 0.00</div>
<div class="t" style="left:262.80px;top:1423.00px;font-size:24.7px;color:#16385a;letter-spacing:0.486px;">04/03/2023</div>
<div class="t" style="left:563.00px;top:1423.00px;font-size:24.7px;color:#3a82c4;letter-spacing:0.901px;">4323-2-1</div>
<div class="t" style="left:760.80px;top:1423.00px;font-size:24.7px;color:#3a82c4;letter-spacing:0.086px;">Billing22, OctoberFour</div>
<div class="t" style="left:1162.30px;top:1423.00px;font-size:24.7px;color:#16385a;letter-spacing:0.787px;">3267293</div>
<div class="t" style="left:1445.30px;top:1423.00px;font-size:24.7px;color:#16385a;">$ 0.00</div>
<div class="t" style="left:262.80px;top:1493.00px;font-size:24.7px;color:#16385a;letter-spacing:0.486px;">04/03/2023</div>
<div class="t" style="left:563.00px;top:1493.00px;font-size:24.7px;color:#3a82c4;letter-spacing:0.901px;">4323-2-1</div>
<div class="t" style="left:760.80px;top:1493.00px;font-size:24.7px;color:#3a82c4;letter-spacing:0.205px;">Billing22, SeptemberTwentyNine</div>
<div class="t" style="left:1162.30px;top:1493.00px;font-size:24.7px;color:#16385a;letter-spacing:0.787px;">3267289</div>
<div class="t" style="left:1445.30px;top:1493.00px;font-size:24.7px;color:#16385a;">$ 0.00</div>
</div>
</div>
</body></html>
